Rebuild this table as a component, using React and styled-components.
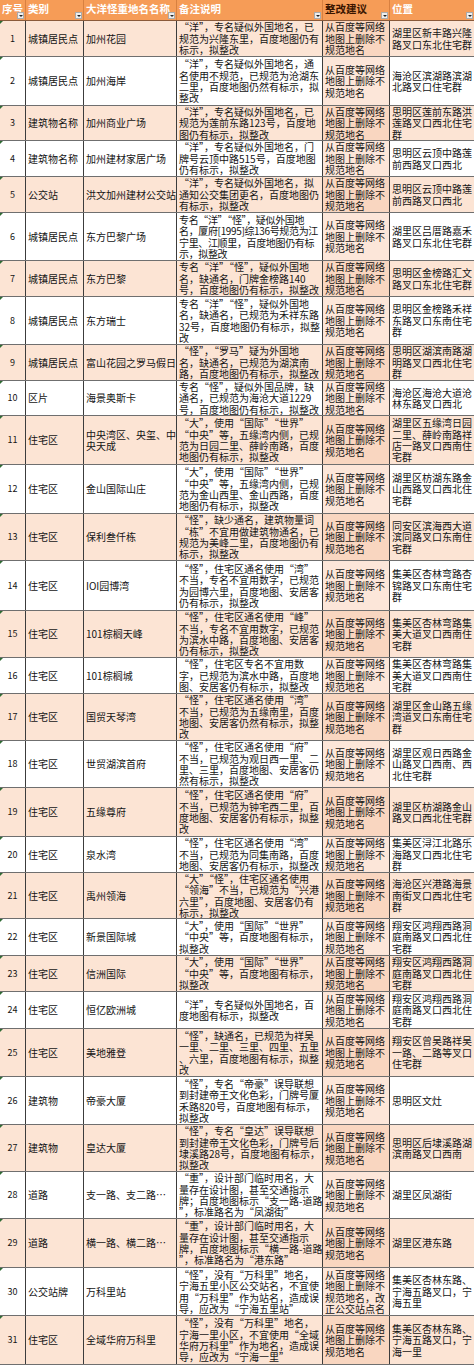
import React from "react";
import styled, { createGlobalStyle } from "styled-components";

const GlobalStyle = createGlobalStyle`
  body {
    margin: 0;
    background: #fff;
    font-family: "Noto Sans CJK SC", "Noto Sans", sans-serif;
  }
`;

const COLS = "26px 58px 93px 146px 67px 84px";
const FIX = "从百度等网络\n地图上删除不\n规范地名";

const headers = ["序号", "类别", "大洋怪重地名名称", "备注说明", "整改建议", "位置"];

const rows = [
  [36, "城镇居民点", "加州花园", "“洋”，专名疑似外国地名，已\n规范为兴隆东里，百度地图仍有\n标示，拟整改", FIX, "湖里区新丰路兴隆\n路叉口东北住宅群"],
  [49, "城镇居民点", "加州海岸", "“洋”，专名疑似外国地名，通\n名使用不规范，已规范为沧湖东\n二里，百度地图仍然有标示，拟\n整改", FIX, "海沧区滨湖路滨湖\n北路叉口住宅群"],
  [35, "建筑物名称", "加州商业广场", "“洋”，专名疑似外国地名，已\n规范为莲前东路123号，百度地\n图仍有标示，拟整改", FIX, "思明区莲前东路洪\n莲路叉口西北住宅\n群"],
  [36, "建筑物名称", "加州建材家居广场", "“洋”，专名疑似外国地名，门\n牌号云顶中路515号，百度地图\n仍有标示，拟整改", FIX, "思明区云顶中路莲\n前西路叉口西北"],
  [36, "公交站", "洪文加州建材公交站", "“洋”，专名疑似外国地名，拟\n通知公交集团更名，百度地图仍\n有标示，拟整改", FIX, "思明区云顶中路莲\n前西路叉口西北"],
  [48, "城镇居民点", "东方巴黎广场", "专名“洋”“怪”，疑似外国地\n名，厦府[1995]综136号规范为江\n宁里、江顺里，百度地图仍有标\n示，拟整改", FIX, "湖里区吕厝路嘉禾\n路叉口东北住宅群", true],
  [36, "城镇居民点", "东方巴黎", "专名“洋”“怪”，疑似外国地\n名，缺通名，门牌金榜路140\n号，百度地图仍有标示，拟整改", FIX, "思明区金榜路汇文\n路叉口东北住宅群"],
  [48, "城镇居民点", "东方瑞士", "专名“洋”“怪”，疑似外国地\n名，缺通名，已规范为禾祥东路\n32号，百度地图仍有标示，拟整\n改", FIX, "思明区金榜路禾祥\n东路叉口东南住宅\n群"],
  [36, "城镇居民点", "富山花园之罗马假日", "“怪”，“罗马”疑为外国地\n名，缺通名，已规范为湖滨南\n路，百度地图仍有标示，拟整改", FIX, "思明区湖滨南路湖\n明路叉口西北住宅\n群"],
  [35, "区片", "海景奥斯卡", "专名“怪”，疑似外国品牌，缺\n通名，已规范为海沧大道1229\n号，百度地图仍有标示，拟整改", FIX, "海沧区海沧大道沧\n林东路叉口西北"],
  [49, "住宅区", "中央湾区、央玺、中\n央天成", "“大”，使用“国际”“世界”\n“中央”等，五缘湾内侧，已规\n范为日园二里、薛岭南路，百度\n地图仍有标示，拟整改", FIX, "湖里区五缘湾日园\n二里、薛岭南路祥\n店一路叉口西南住\n宅群"],
  [49, "住宅区", "金山国际山庄", "“大”，使用“国际”“世界”\n“中央”等，五缘湾内侧，已规\n范为金山西里、金山西路，百度\n地图仍有标示，拟整改", FIX, "湖里区枋湖东路金\n山西路叉口西北住\n宅群"],
  [47, "住宅区", "保利叁仟栋", "“怪”，缺少通名，建筑物量词\n“栋”不宜用做建筑物通名，已\n规范为美峰二里，百度地图仍有\n标示，拟整改", FIX, "同安区滨海西大道\n滨同路叉口东南住\n宅群"],
  [50, "住宅区", "IOI园博湾", "“怪”，住宅区通名使用“湾”\n不当，专名不宜用数字，已规范\n为园博六里，百度地图、安居客\n仍有标示，拟整改", FIX, "集美区杏林弯路杏\n锦路叉口东南住宅\n群"],
  [47, "住宅区", "101棕榈天峰", "“怪”，住宅区通名使用“峰”\n不当，专名不宜用数字，已规范\n为滨水中路，百度地图、安居客\n仍有标示，拟整改", FIX, "集美区杏林弯路集\n美大道叉口西南住\n宅群"],
  [36, "住宅区", "101棕榈城", "“怪”，住宅区专名不宜用数\n字，已规范为滨水中路，百度地\n图、安居客仍有标示，拟整改", FIX, "集美区杏林弯路集\n美大道叉口西南住\n宅群"],
  [47, "住宅区", "国贸天琴湾", "“怪”，住宅区通名使用“湾”\n不当，已规范为五缘南里，百度\n地图、安居客仍然有标示，拟整\n改", FIX, "湖里区金山路五缘\n湾道叉口东南住宅\n群"],
  [47, "住宅区", "世贸湖滨首府", "“怪”，住宅区通名使用“府”\n不当，已规范为观日西一里、二\n里、三里，百度地图、安居客仍\n然有标示，拟整改", FIX, "湖里区观日西路金\n山路叉口西南、西\n北住宅群"],
  [49, "住宅区", "五缘尊府", "“怪”，住宅区通名使用“府”\n不当，已规范为钟宅西二里，百\n度地图、安居客仍有标示，拟整\n改", FIX, "湖里区枋湖路金山\n路叉口西北住宅群"],
  [36, "住宅区", "泉水湾", "“怪”，住宅区通名使用“湾”\n不当，已规范为同集南路，百度\n地图、安居客仍有标示，拟整改", FIX, "集美区浔江北路乐\n海路叉口西北住宅\n群"],
  [46, "住宅区", "禹州领海", "“大”“怪”，住宅区通名使用\n“领海”不当，已规范为“兴港\n六里”，百度地图、安居客仍有\n标示，拟整改", FIX, "海沧区兴港路海景\n南街叉口西北住宅\n群"],
  [37, "住宅区", "新景国际城", "“大”，使用“国际”“世界”\n“中央”等，百度地图有标示，\n拟整改", FIX, "翔安区鸿翔西路洞\n庭南路叉口西北住\n宅群"],
  [36, "住宅区", "信洲国际", "“大”，使用“国际”“世界”\n“中央”等，百度地图有标示，\n拟整改", FIX, "翔安区鸿翔西路洞\n庭南路叉口西北住\n宅群"],
  [37, "住宅区", "恒亿欧洲城", "“洋”，专名疑似外国地名，百\n度地图有标示，拟整改", FIX, "翔安区鸿翔西路洞\n庭南路叉口西北住\n宅群"],
  [48, "住宅区", "美地雅登", "“怪”，缺通名，已规范为祥吴\n一里、二里、三里、四里、五里\n、六里，百度地图有标示，拟整\n改", FIX, "翔安区曾吴路祥吴\n一路、二路等叉口\n住宅群"],
  [48, "建筑物", "帝豪大厦", "“怪”，专名“帝豪”误导联想\n到封建帝王文化色彩，门牌号厦\n禾路820号，百度地图有标示，\n拟整改", FIX, "思明区文灶"],
  [47, "建筑物", "皇达大厦", "“怪”，专名“皇达”误导联想\n到封建帝王文化色彩，门牌号后\n埭溪路28号，百度地图有标示，\n拟整改", FIX, "思明区后埭溪路湖\n滨南路叉口西南"],
  [47, "道路", "支一路、支二路…", "“重”，设计部门临时用名，大\n量存在设计图，甚至交通指示\n牌；百度地图标示“支一路-道路\n”，标准路名为“凤湖街”", FIX, "湖里区凤湖街"],
  [49, "道路", "横一路、横二路…", "“重”，设计部门临时用名，大\n量存在设计图，甚至交通指示\n牌，百度地图标示“横一路-道路\n”，标准路名为“港东路”", FIX, "湖里区港东路"],
  [48, "公交站牌", "万科里站", "“怪”，没有“万科里”地名，\n宁海五里小区公交站名，不宜使\n用“万科里”作为站名，造成误\n导，应改为“宁海五里站”", "从百度等网络\n地图上删除不\n规范地名，改\n正公交站点名", "集美区杏林东路、\n宁海五路叉口，宁\n海五里"],
  [49, "住宅区", "全域华府万科里", "“怪”，没有“万科里”地名，\n宁海一里小区，不宜使用“全域\n华府万科里”作为地名，造成误\n导，应改为“宁海一里”", FIX, "集美区杏林东路、\n宁海五路叉口，宁\n海一里"],
];

const Table = styled.div`
  width: 474px;
  display: flex;
  flex-direction: column;
`;

const HeaderRow = styled.div`
  display: grid;
  grid-template-columns: ${COLS};
  height: 21px;
  background: #f69c57;
  border-bottom: 1px solid #8a5a3a;
  box-sizing: border-box;
`;

const HeadCell = styled.div`
  position: relative;
  padding: 2px 0 0 2px;
  font-size: 10.5px;
  line-height: 13px;
  font-weight: 700;
  white-space: nowrap;
  overflow: hidden;
  color: ${(p) => (p.$dark ? "#3a1500" : "#fff")};
  border-right: 1px solid #d88040;
  &:last-child {
    border-right: none;
  }
`;

const Filter = styled.span`
  position: absolute;
  right: 1px;
  bottom: 1px;
  width: 7px;
  height: 7px;
  background: #eee;
  border: 1px solid #aaa;
  box-sizing: border-box;
  &::after {
    content: "";
    position: absolute;
    left: 1px;
    top: 2px;
    border-left: 2px solid transparent;
    border-right: 2px solid transparent;
    border-top: 2px solid #222;
  }
`;

const Row = styled.div`
  display: grid;
  grid-template-columns: ${COLS};
  height: ${(p) => p.$h}px;
  background: ${(p) => (p.$odd ? "#fce4d4" : "#fff")};
  border-bottom: 1px solid #6f6f6f;
  box-sizing: border-box;
`;

const Cell = styled.div`
  display: flex;
  align-items: center;
  justify-content: ${(p) => (p.$center ? "center" : "flex-start")};
  padding-left: ${(p) => (p.$center ? 0 : 2)}px;
  border-right: 1px solid #3c3c3c;
  overflow: hidden;
  white-space: pre;
  font-size: ${(p) => (p.$small ? 9 : 10)}px;
  line-height: 11.4px;
  letter-spacing: ${(p) => (p.$tight ? "-0.35px" : "0")};
  color: #141414;
  background: ${(p) => (p.$fix ? (p.$odd ? "#f9d6c0" : "#fce6d9") : "transparent")};
  &:last-child {
    border-right: none;
  }
`;

const NumCell = styled(Cell)`
  position: relative;
  &::before {
    content: "";
    position: absolute;
    left: 0;
    top: 0;
    border-top: 3px solid #2f6b34;
    border-right: 3px solid transparent;
  }
`;

const App = () => {
  return (
    <>
      <GlobalStyle />
      <Table>
        <HeaderRow>
          {headers.map((h, i) => (
            <HeadCell key={h} $dark={i === 4}>
              {h}
              <Filter />
            </HeadCell>
          ))}
        </HeaderRow>
        {rows.map(([h, kind, name, note, fix, place, tight], i) => {
          const odd = i % 2 === 0;
          return (
            <Row key={i} $h={h} $odd={odd}>
              <NumCell $center $small>{i + 1}</NumCell>
              <Cell>{kind}</Cell>
              <Cell>{name}</Cell>
              <Cell $tight={tight}>{note}</Cell>
              <Cell $fix $odd={odd}>{fix}</Cell>
              <Cell>{place}</Cell>
            </Row>
          );
        })}
      </Table>
    </>
  );
};

export default App;
